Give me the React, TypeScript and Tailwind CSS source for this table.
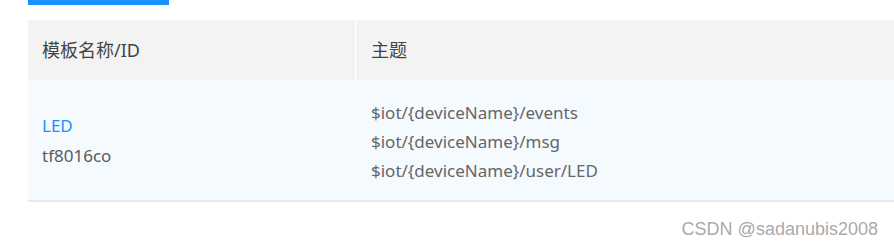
import { clsx } from 'clsx';

type Template = { name: string; id: string; topics: string[] };

const templates: Template[] = [
  {
    name: 'LED',
    id: 'tf8016co',
    topics: ['$iot/{deviceName}/events', '$iot/{deviceName}/msg', '$iot/{deviceName}/user/LED'],
  },
];

const font = "font-['Microsoft_YaHei','Noto_Sans','Noto_Sans_CJK_SC',sans-serif]";

export default function App() {
  return (
    <div className={clsx('relative h-[248px] w-[894px] overflow-hidden bg-white', font)}>
      {/* active tab underline */}
      <div className="ml-[28px] h-[5px] w-[141px] bg-[#1890ff]" />

      <div className="ml-[28px] mt-[15px]">
        {/* table header */}
        <div className="flex h-[60px] bg-[#f3f3f3] text-[17px] text-[#444]">
          <div className="flex w-[328px] items-center border-r border-white pl-[14px] text-[18px]">
            模板名称/ID
          </div>
          <div className="flex flex-1 items-center pl-[15px] text-[18px]">主题</div>
        </div>

        {templates.map((t) => (
          <div key={t.id} className="flex h-[122px] border-b-2 border-[#e8e8e8] bg-[#f5faff] text-[17px]">
            <div className="flex w-[328px] flex-col justify-center pl-[14px] pt-[2px] leading-[30px]">
              <span className="text-[#1890ff]">{t.name}</span>
              <span className="text-[#5a5a5a]">{t.id}</span>
            </div>
            <div className="flex flex-1 flex-col justify-center pl-[15px] pt-[3px] leading-[29px] text-[#666]">
              {t.topics.map((topic) => (
                <span key={topic}>{topic}</span>
              ))}
            </div>
          </div>
        ))}
      </div>

      <div className="absolute right-[16px] top-[216px] font-['Liberation_Sans',sans-serif] text-[18px] text-[#aaa]">
        CSDN @sadanubis2008
      </div>
    </div>
  );
}
